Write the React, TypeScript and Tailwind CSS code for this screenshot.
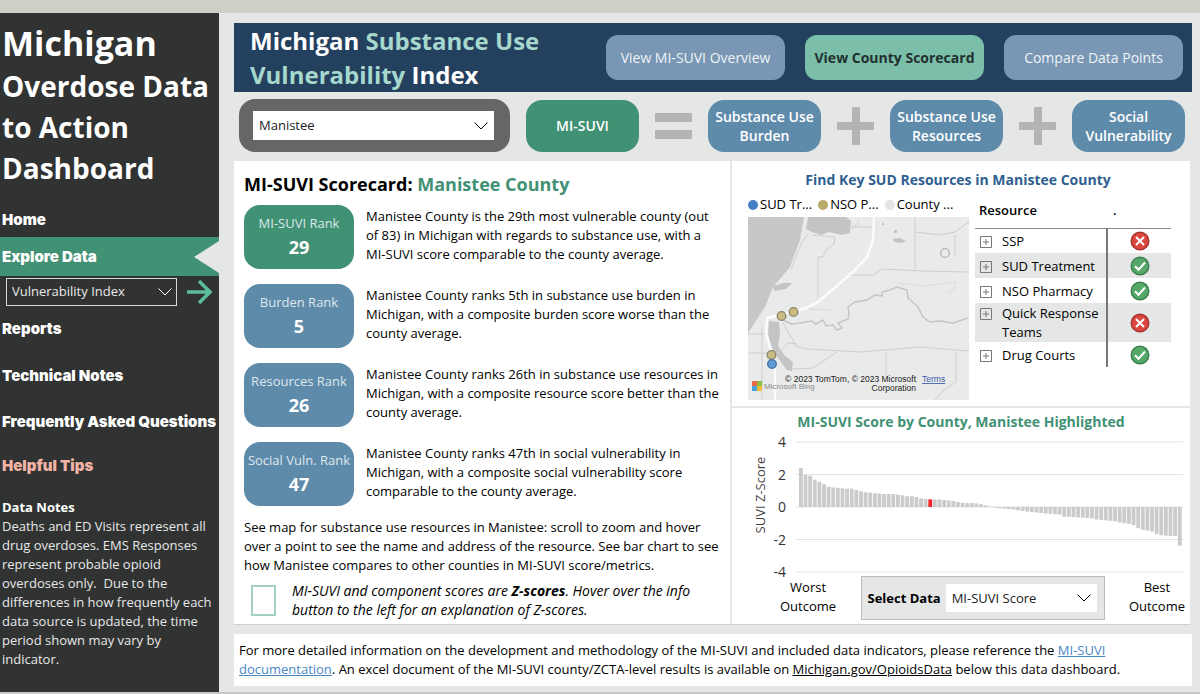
import React, { useState } from 'react';

const NAV_LINK = "px-[2px] font-['Inter',sans-serif] text-[15px] leading-5 font-black";

const COUNTY_SCORES = [
  2.4, 1.97, 1.93, 1.68, 1.55, 1.4, 1.25, 1.2, 1.18, 1.15, 1.13, 1.13, 1.05, 0.97, 0.9, 0.88, 0.84,
  0.83, 0.8, 0.8, 0.8, 0.76, 0.72, 0.67, 0.66, 0.62, 0.53, 0.5, 0.47, 0.46, 0.46, 0.43, 0.4, 0.36,
  0.3, 0.26, 0.24, 0.24, 0.22, 0.17, 0.1, 0.03, -0.04, -0.08, -0.1, -0.13, -0.16, -0.2, -0.24,
  -0.28, -0.31, -0.34, -0.37, -0.4, -0.42, -0.44, -0.46, -0.6, -0.61, -0.62, -0.64, -0.66, -0.68,
  -0.7, -0.77, -0.8, -0.82, -0.85, -0.88, -0.95, -1, -1.04, -1.12, -1.3, -1.4, -1.44, -1.5, -1.66,
  -1.74, -1.76, -1.78, -1.78, -2.38,
];
const HIGHLIGHTED = 28;

const RANKS = [
  {
    label: 'MI-SUVI Rank',
    value: 29,
    color: 'bg-[#419174]',
    text: 'Manistee County is the 29th most vulnerable county (out\nof 83) in Michigan with regards to substance use, with a\nMI-SUVI score comparable to the county average.',
  },
  {
    label: 'Burden Rank',
    value: 5,
    color: 'bg-[#5f8bab]',
    text: 'Manistee County ranks 5th in substance use burden in\nMichigan, with a composite burden score worse than the\ncounty average.',
  },
  {
    label: 'Resources Rank',
    value: 26,
    color: 'bg-[#5f8bab]',
    text: 'Manistee County ranks 26th in substance use resources in\nMichigan, with a composite resource score better than the\ncounty average.',
  },
  {
    label: 'Social Vuln. Rank',
    value: 47,
    color: 'bg-[#5f8bab]',
    text: 'Manistee County ranks 47th in social vulnerability in\nMichigan, with a composite social vulnerability score\ncomparable to the county average.',
  },
];

const RESOURCES = [
  { name: 'SSP', available: false },
  { name: 'SUD Treatment', available: true },
  { name: 'NSO Pharmacy', available: true },
  { name: 'Quick Response Teams', available: false },
  { name: 'Drug Courts', available: true },
];

function Chevron({ className }: { className: string }) {
  return (
    <svg viewBox="0 0 16 10" fill="none" stroke="currentColor" className={`pointer-events-none absolute h-[10px] w-4 ${className}`}>
      <path d="M1.5 1.5 8 8l6.5-6.5" />
    </svg>
  );
}

function Sidebar() {
  return (
    <aside className="w-[219px] shrink-0 bg-[#303332] text-white">
      <h1 className="px-[2px] pt-2 text-[28px] leading-[41px] font-bold whitespace-nowrap">
        <span className="text-[34px] leading-[44px]">Michigan</span>
        <br />
        Overdose Data
        <br />
        to Action
        <br />
        Dashboard
      </h1>
      <nav className="flex flex-col pt-[21px] whitespace-nowrap">
        <a href="#home" className={NAV_LINK}>Home</a>
        <a href="#explore" className="mt-[7px] flex h-[39px] items-center justify-between bg-[#419174]">
          <span className={NAV_LINK}>Explore Data</span>
          <svg viewBox="0 0 25 32" className="h-8 w-[25px]">
            <path d="M25 0v32L0 16z" fill="#e5e6e6" />
          </svg>
        </a>
        <div className="mt-[2px] flex items-center gap-[10px] pl-[6px]">
          <div className="relative w-[171px]">
            <select aria-label="Explore data page" className="block h-7 w-full appearance-none border border-[#d8d8d8] bg-[#303332] pl-[5px] text-[13px] text-[#e8e8e8]">
              <option>Vulnerability Index</option>
            </select>
            <Chevron className="top-[9px] right-1" />
          </div>
          <button aria-label="Go to page">
            <svg viewBox="0 0 26 26" fill="none" stroke="#5cbd9c" strokeWidth="3.5" className="h-[26px] w-[26px]">
              <path d="M0 13h24M12 2l11 11-11 11" />
            </svg>
          </button>
        </div>
        <a href="#reports" className={`mt-[13px] ${NAV_LINK}`}>Reports</a>
        <a href="#technical" className={`mt-[27px] ${NAV_LINK}`}>Technical Notes</a>
        <a href="#faq" className={`mt-[26px] ${NAV_LINK}`}>Frequently Asked Questions</a>
        <a href="#tips" className={`mt-[24px] text-[#f0b3a4] ${NAV_LINK}`}>Helpful Tips</a>
      </nav>
      <section className="px-[2px] pt-[22px] text-[13px] leading-[19px]">
        <h2 className="font-bold">Data Notes</h2>
        <p className="whitespace-pre text-[#e8e8e8]">
          {'Deaths and ED Visits represent all\ndrug overdoses. EMS Responses\nrepresent probable opioid\noverdoses only.  Due to the\ndifferences in how frequently each\ndata source is updated, the time\nperiod shown may vary by\nindicator.'}
        </p>
      </section>
    </aside>
  );
}

function Header() {
  const tab = 'h-[45px] w-[179px] rounded-xl text-sm whitespace-nowrap';
  return (
    <header className="flex h-[69px] items-center gap-5 bg-[#24405f] pr-[9px] pl-4">
      <h2 className="flex-1 text-2xl leading-[34px] font-bold whitespace-nowrap text-white">
        Michigan <span className="text-[#a6d8cd]">Substance Use<br />Vulnerability</span> Index
      </h2>
      <button className={`${tab} bg-[#7997b4] text-[#eef3f7]`}>View MI-SUVI Overview</button>
      <button className={`${tab} bg-[#7bbfaa] font-bold text-[#22302e]`}>View County Scorecard</button>
      <button className={`${tab} bg-[#7997b4] text-[#eef3f7]`}>Compare Data Points</button>
    </header>
  );
}

function Plus() {
  return (
    <svg viewBox="0 0 37 38" className="h-[38px] w-[37px]">
      <path d="M15 0h8v15h14v8H23v15h-8V23H0v-8h15z" fill="#b3b5b5" />
    </svg>
  );
}

function FormulaRow() {
  const box = 'h-[52px] w-[113px] rounded-2xl text-sm leading-[19px] font-semibold text-white';
  return (
    <div className="flex items-center justify-between pr-[7px] pl-[5px]">
      <div className="w-[271px] rounded-2xl bg-[#666666] py-3 pr-4 pl-[14px]">
        <div className="relative">
          <select aria-label="County" className="block h-[29px] w-full appearance-none bg-white pl-[6px] text-[13px] text-[#222]">
            <option>Manistee</option>
          </select>
          <Chevron className="top-[10px] right-[5px]" />
        </div>
      </div>
      <button className={`${box} bg-[#419174]`}>MI-SUVI</button>
      <svg viewBox="0 0 37 26" className="h-[26px] w-[37px]">
        <path d="M0 0h37v9H0zM0 17h37v9H0z" fill="#b3b5b5" />
      </svg>
      <button className={`${box} bg-[#5f8bab]`}>Substance Use<br />Burden</button>
      <Plus />
      <button className={`${box} bg-[#5f8bab]`}>Substance Use<br />Resources</button>
      <Plus />
      <button className={`${box} bg-[#5f8bab]`}>Social<br />Vulnerability</button>
    </div>
  );
}

function Scorecard() {
  return (
    <section className="w-[498px] shrink-0 border-r-2 border-[#e5e6e6] pt-[11px] pl-[10px] whitespace-nowrap">
      <h3 className="text-lg leading-6 font-bold">
        MI-SUVI Scorecard: <span className="text-[#419174]">Manistee County</span>
      </h3>
      <div className="mt-[9px] flex flex-col gap-[15px]">
        {RANKS.map((rank) => (
          <div key={rank.label} className="flex gap-3">
            <div className={`flex h-16 w-[110px] shrink-0 flex-col items-center rounded-2xl pt-2 text-white ${rank.color}`}>
              <span className="text-[13px] leading-5 text-[#dde8ec]">{rank.label}</span>
              <span className="text-lg leading-7 font-bold">{rank.value}</span>
            </div>
            <p className="pt-[2px] text-[13px] leading-[19px] whitespace-pre">{rank.text}</p>
          </div>
        ))}
      </div>
      <p className="mt-3 text-[13px] leading-[19px] whitespace-pre">
        {'See map for substance use resources in Manistee: scroll to zoom and hover\nover a point to see the name and address of the resource. See bar chart to see\nhow Manistee compares to other counties in MI-SUVI score/metrics.'}
      </p>
      <div className="mt-[6px] flex items-center gap-4 pl-[7px]">
        <button aria-label="About Z-scores" className="h-[31px] w-[25px] border-2 border-[#a3d0c0]" />
        <p className="text-sm leading-[19px] italic">
          MI-SUVI and component scores are <b>Z-scores</b>. Hover over the info
          <br />
          button to the left for an explanation of Z-scores.
        </p>
      </div>
    </section>
  );
}

function ResourceMap() {
  return (
    <svg viewBox="0 0 221 183" className="h-[183px] w-[221px] shrink-0 bg-[#e9eaea]">
      <path d="M0 0h56l-4 23-10 27-17 20-8 20L0 116z" fill="#c6c8c8" />
      <path d="M60 0h38l5 4-1 12-8 2-13-3-8 3-9-3-6-3zM25 69l11-3h8l-6 6-12 2zM21 104l10 1 1 12-2 12 6 9 9 7-1 9-5-1-9-12-6-10-4-14zM145 22l7-1 6 3-4 2-8-1zM146 13h3v3h-3zM134 6h2v2h-2z" fill="#c3c5c5" />
      <g fill="none" stroke="#cdcfcf">
        <path d="M60 17l-6 8-11 27M64 18l23 2-1 7-8 6-3 7h-5v40M99 58h26l9-6 41 2 46 1M167 0v53M103 10h22M112 4l-8 8M167 15l25 3 15-3 14-10M207 18v22M35 106l14 24 11 2 52 3 60-5 49 4M0 117h22M0 136h30M14 110v73M30 136l10-10 9 1M44 152l21-1 24-16M138 135v25M208 135v30l-12 8-10 11" />
        <path d="M35 103l8 4 9-1 6-1 6-1 4 3 7-4 3 6 7-1 4 5 5-2-4-5 10-4 1-6-1-6 7-5 12-2 8-5 7 1v-4l8-2 7-3 10 3 1 8 10 9 5 10 7 5 10-1 13 2 15-5" strokeWidth="1.5" stroke="#c4c6c6" />
        <path d="M150 66l25 3 15-2 18-2-1 6-8 5M60 92l22 1" stroke="#dadcdc" />
      </g>
      <path d="M126 0l-1 23-6 17-14 15-35 30-10 5-15 5-26 6-1 15 4 14 5 16v37" fill="none" stroke="#fcfcfc" strokeWidth="2.5" />
      <g stroke="#8d8568" strokeWidth="1.3" fill="#c8bb84">
        <circle cx="33.5" cy="99" r="4.3" />
        <circle cx="45.5" cy="95" r="4.3" />
        <circle cx="23.5" cy="138" r="4.3" />
      </g>
      <circle cx="24" cy="147" r="4.3" fill="#5f9ad8" stroke="#3f6f9f" strokeWidth="1.3" />
      <circle cx="197" cy="36" r="4.3" fill="#e9eaea" stroke="#b2b4b4" strokeWidth="1.3" />
      <path d="M4 164h5v5H4z" fill="#e8694a" />
      <path d="M9 164h5v5H9z" fill="#8fbd45" />
      <path d="M4 169h5v5H4z" fill="#45a5de" />
      <path d="M9 169h5v5H9z" fill="#f2bd3d" />
      <g fontFamily="Liberation Sans, sans-serif" fontSize="8.5" fill="#222">
        <text x="16" y="172" fontSize="8" fill="#8a8a8a">Microsoft Bing</text>
        <text x="168" y="165" textAnchor="end">© 2023 TomTom, © 2023 Microsoft</text>
        <text x="168" y="174" textAnchor="end">Corporation</text>
        <a href="#terms">
          <text x="174" y="165" fill="#3a5aa8" textDecoration="underline">Terms</text>
        </a>
      </g>
    </svg>
  );
}

function StatusIcon({ available }: { available: boolean }) {
  return (
    <svg viewBox="0 0 20 20" fill="none" className="mx-auto h-5 w-5">
      <circle cx="10" cy="10" r="8.8" fill={available ? '#55a868' : '#d9473f'} stroke={available ? '#3b7f50' : '#a8332f'} strokeWidth="1.4" />
      <path d={available ? 'M5 10.2l3.5 3.5L15 6.5' : 'M6 6l8 8M14 6l-8 8'} stroke="#fff" strokeWidth="2" />
    </svg>
  );
}

function ResourceTable() {
  return (
    <table className="w-[196px] text-[13px] leading-[19px]">
      <thead>
        <tr className="h-[27px] border-b border-[#8a8a8a] text-left align-top">
          <th className="pl-1 font-semibold">Resource</th>
          <th className="w-[64px] pl-[6px] font-semibold">.</th>
        </tr>
      </thead>
      <tbody>
        {RESOURCES.map(({ name, available }) => (
          <tr key={name} className="h-[25px] even:bg-[#e5e6e6]">
            <td className="border-r-2 border-[#777] p-0">
              <div className="flex gap-[10px] pt-px pl-[5px]">
                <button aria-label={`Expand ${name}`} className="mt-1 h-3 w-3 shrink-0">
                  <svg viewBox="0 0 12 12" fill="none" stroke="#777">
                    <path d="M.5.5h11v11H.5zM3 6h6M6 3v6" />
                  </svg>
                </button>
                <span>{name}</span>
              </div>
            </td>
            <td className="p-0">
              <StatusIcon available={available} />
            </td>
          </tr>
        ))}
      </tbody>
    </table>
  );
}

function LegendItem({ color, label }: { color: string; label: string }) {
  return (
    <span className="flex items-center gap-[2px]">
      <span className={`h-[10px] w-[10px] rounded-full ${color}`} />
      {label}
    </span>
  );
}

function ResourcesPanel() {
  return (
    <section className="h-[247px] border-b-2 border-[#e5e6e6] pt-2 pl-4">
      <h3 className="pr-[22px] text-center text-sm leading-[22px] font-bold text-[#2f5f91]">
        Find Key SUD Resources in Manistee County
      </h3>
      <div className="mt-[2px] flex gap-[6px]">
        <div>
          <div className="flex h-6 items-center gap-[6px] text-[13px] whitespace-nowrap">
            <LegendItem color="bg-[#4580c4]" label="SUD Tr..." />
            <LegendItem color="bg-[#b9ab6c]" label="NSO P..." />
            <LegendItem color="bg-[#e3e4e4]" label="County ..." />
          </div>
          <ResourceMap />
        </div>
        <div className="pt-2">
          <ResourceTable />
        </div>
      </div>
    </section>
  );
}

function ScoreChart() {
  const zeroY = 74;
  const unit = 16.25;
  return (
    <svg viewBox="0 0 458 150" className="block w-full">
      {[4, 2, 0, -2, -4].map((tick) => (
        <g key={tick}>
          <path d={`M64 ${zeroY - tick * unit}H451`} stroke="#e3e3e3" />
          <text x="54" y={zeroY - tick * unit + 5} textAnchor="end" fontSize="14" fill="#333">{tick}</text>
        </g>
      ))}
      {COUNTY_SCORES.map((score, i) => (
        <rect
          key={i}
          x={67 + i * 4.62}
          y={score > 0 ? zeroY - score * unit : zeroY}
          width={3.8}
          height={Math.abs(score) * unit}
          fill={i === HIGHLIGHTED ? '#f5232b' : '#cbcbcb'}
        />
      ))}
      <text transform="translate(33 62) rotate(-90)" textAnchor="middle" fontSize="13" fill="#444">SUVI Z-Score</text>
    </svg>
  );
}

function ChartPanel() {
  const [metric, setMetric] = useState('MI-SUVI Score');

  return (
    <section className="pt-[3px]">
      <h3 className="text-center text-sm leading-[22px] font-bold text-[#419174]">
        MI-SUVI Score by County, Manistee Highlighted
      </h3>
      <ScoreChart />
      <div className="-mt-[7px] flex items-start justify-between pr-[5px] pb-1 pl-12 text-center text-[13px] leading-[19px]">
        <p className="pt-[2px]">Worst<br />Outcome</p>
        <label className="relative flex h-[44px] w-[244px] items-center gap-[5px] border border-[#bbb] bg-[#e5e6e6] pr-[7px] pl-[6px] font-bold whitespace-nowrap">
          Select Data
          <select
            value={metric}
            onChange={(e) => setMetric(e.target.value)}
            className="h-7 min-w-0 flex-1 appearance-none bg-white pl-[6px] text-[13px] font-normal text-[#222]"
          >
            <option>MI-SUVI Score</option>
          </select>
          <Chevron className="top-4 right-3" />
        </label>
        <p className="pt-[2px]">Best<br />Outcome</p>
      </div>
    </section>
  );
}

function App() {
  return (
    <div className="flex min-h-screen flex-col border-t-[13px] border-b-2 border-t-[#cfd0c6] border-b-[#c8c9c5] bg-[#e5e6e6] font-['Open_Sans',sans-serif] text-black">
      <div className="flex flex-1">
        <Sidebar />
        <main className="min-w-0 flex-1 pt-[10px] pr-2 pl-[15px]">
          <Header />
          <div className="mt-[7px]">
            <FormulaRow />
          </div>
          <div className="mt-[9px] mr-[2px] flex border-b border-[#cfcfcf] bg-white">
            <Scorecard />
            <div className="min-w-0 flex-1">
              <ResourcesPanel />
              <ChartPanel />
            </div>
          </div>
          <footer className="mt-[9px] bg-white px-[5px] py-[7px] text-[13px] leading-[19px]">
            For more detailed information on the development and methodology of the MI-SUVI and included data indicators, please reference the{' '}
            <a href="#documentation" className="text-[#4a86c5] underline">MI-SUVI documentation</a>. An excel document of the MI-SUVI county/ZCTA-level results is available on{' '}
            <a href="#opioids" className="underline">Michigan.gov/OpioidsData</a> below this data dashboard.
          </footer>
        </main>
      </div>
    </div>
  );
}

export default App;
